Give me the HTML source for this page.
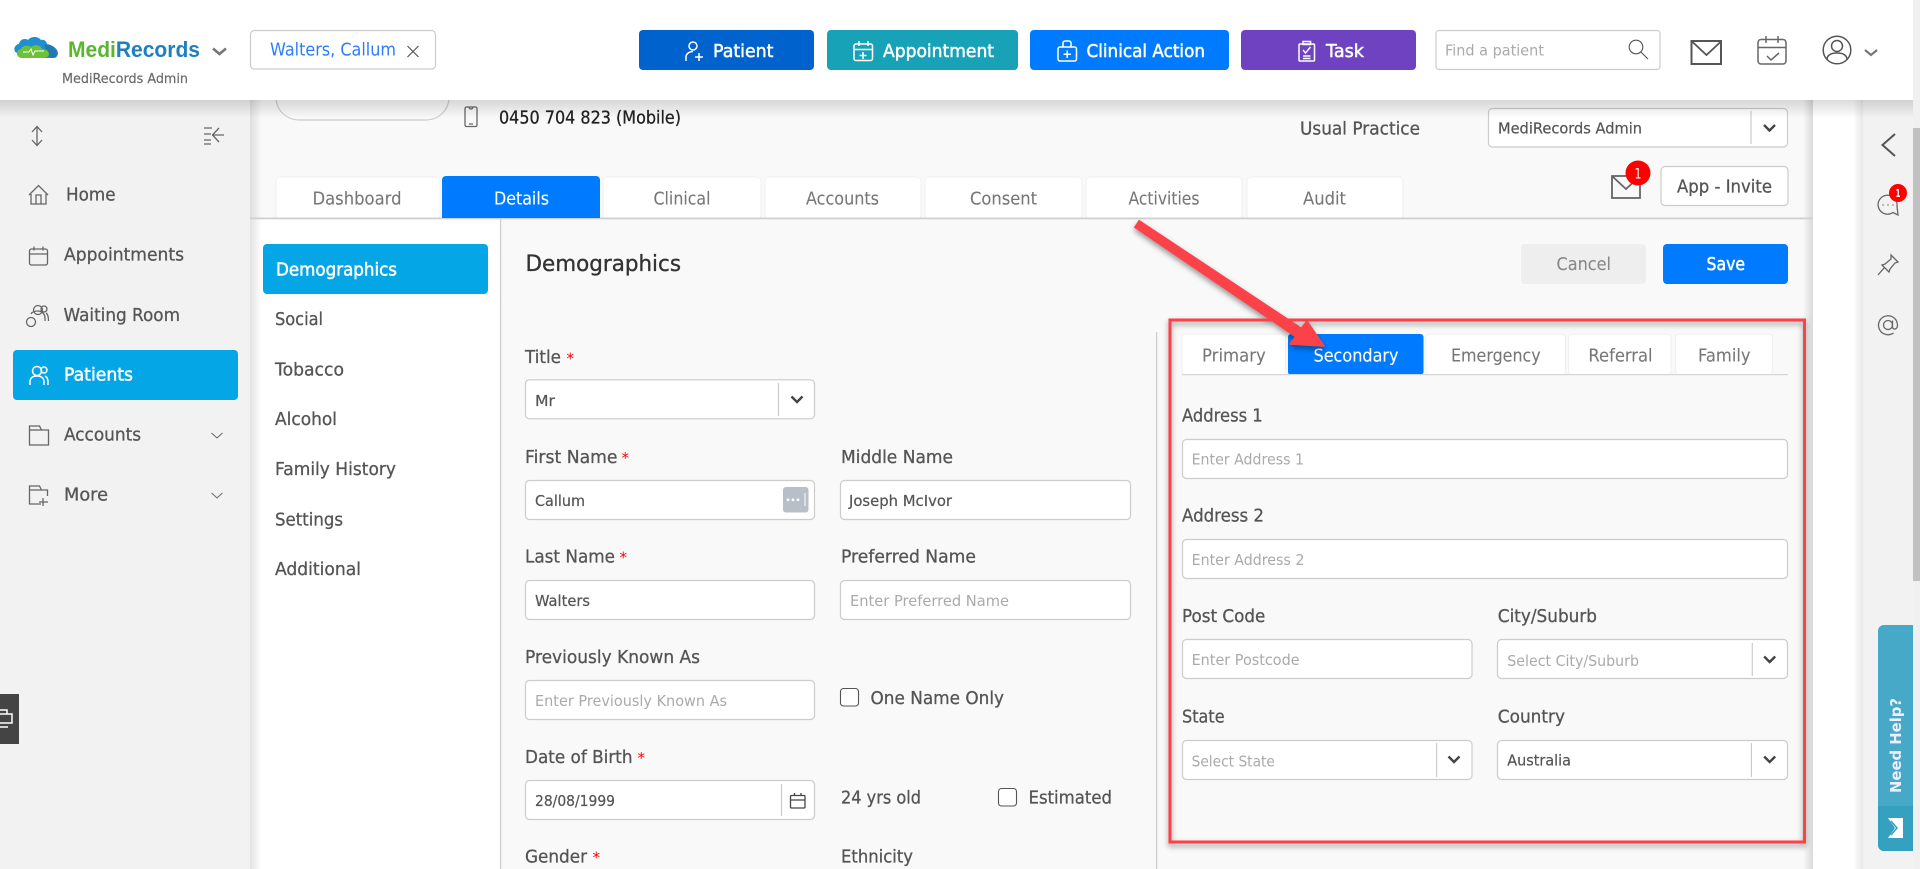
<!DOCTYPE html>
<html lang="en"><head><meta charset="utf-8"><title>MediRecords</title>
<style>
html,body{margin:0;padding:0;background:#f9f9f9;overflow:hidden}
svg{display:block}
text{font-family:"DejaVu Sans","Liberation Sans",sans-serif;font-size:18px;fill:#555;white-space:pre;stroke:#555;stroke-width:.12}
text:not([transform]){transform:translateY(-.7px)}
.m{stroke:#555;stroke-width:.3}
.ph{font-size:15px;fill:#aaa;stroke:none}
.v{font-size:15px;fill:#555;stroke:#555;stroke-width:.22}
.w{fill:#fff;stroke:#fff;stroke-width:.5}
.r{fill:#f00;font-size:15px;stroke:none}
.i{fill:none;stroke:#666;stroke-width:1.3}
.iw{fill:none;stroke:#fff;stroke-width:1.5}
.box{fill:#fff;stroke:#ccc;stroke-width:1.2}
.div{stroke:#ccc;stroke-width:1.2}
.ch{fill:none;stroke:#444;stroke-width:2.4}
.tab{fill:#fff;stroke:#f0f0f0;stroke-width:1}
.tt{fill:#777;stroke:#777;stroke-width:.1}
</style></head><body>
<svg xmlns="http://www.w3.org/2000/svg" width="1920" height="869" viewBox="0 0 1920 869">
<defs>
<linearGradient id="gd" x1="0" y1="0" x2="0" y2="1"><stop offset="0" stop-color="#000" stop-opacity=".14"/><stop offset="1" stop-color="#000" stop-opacity="0"/></linearGradient>
<linearGradient id="gr" x1="0" y1="0" x2="1" y2="0"><stop offset="0" stop-color="#000" stop-opacity=".11"/><stop offset="1" stop-color="#000" stop-opacity="0"/></linearGradient>
<linearGradient id="gl" x1="1" y1="0" x2="0" y2="0"><stop offset="0" stop-color="#000" stop-opacity=".13"/><stop offset="1" stop-color="#000" stop-opacity="0"/></linearGradient>
<filter id="sh" x="-5%" y="-5%" width="110%" height="110%"><feDropShadow dx="0" dy="3" stdDeviation="3" flood-color="#000" flood-opacity=".4"/></filter>
</defs>

<!-- backgrounds -->
<rect width="1920" height="869" fill="#f9f9f9"/>
<rect x="0" y="100" width="250" height="769" fill="#f2f2f2"/>
<rect x="250" y="219" width="250" height="650" fill="#fff"/>
<rect x="500" y="218" width="1.2" height="651" fill="#ccc"/>
<rect x="1813" y="100" width="50" height="769" fill="#fff"/>
<rect x="1863" y="100" width="50" height="769" fill="#f2f2f2"/>
<rect x="1913" y="0" width="7" height="869" fill="#f0f0f0"/>
<rect x="1913" y="128" width="7" height="453" fill="#c1c1c1"/>
<rect x="250" y="100" width="12" height="769" fill="url(#gr)"/>
<rect x="1803" y="100" width="10" height="769" fill="url(#gl)"/>
<rect x="1853" y="100" width="10" height="769" fill="url(#gl)" opacity=".7"/>

<!-- patient summary -->
<path d="M276 100v-3c0 13 10 23 24 23h125c14 0 24-10 24-23v3" fill="#f9f9f9" stroke="#ccc" stroke-width="1.2"/>
<rect x="465" y="107" width="12" height="19.5" rx="1.5" class="i"/><path d="M469 107a2 2 0 0 0 4 0M469 124h4" class="i"/>
<text x="499" y="124" textLength="182" lengthAdjust="spacingAndGlyphs" style="fill:#222;stroke:#222;stroke-width:.3">0450 704 823 (Mobile)</text>
<text x="1300" y="135" textLength="120" lengthAdjust="spacingAndGlyphs" class="m">Usual Practice</text>
<rect x="1488.5" y="108.5" width="299" height="38.5" rx="4" class="box"/>
<text x="1498" y="134" textLength="144" lengthAdjust="spacingAndGlyphs" class="v">MediRecords Admin</text>
<line x1="1751" y1="111" x2="1751" y2="144" class="div"/>
<path d="M1764 125l5.5 5.5 5.5-5.5" class="ch"/>

<!-- main tabs -->
<rect x="276" y="177" width="164" height="42" rx="4" class="tab"/>
<rect x="442" y="176" width="158" height="43" rx="4" fill="#007bff"/>
<rect x="603" y="177" width="158" height="42" rx="4" class="tab"/>
<rect x="765" y="177" width="156" height="42" rx="4" class="tab"/>
<rect x="925" y="177" width="157" height="42" rx="4" class="tab"/>
<rect x="1086" y="177" width="156" height="42" rx="4" class="tab"/>
<rect x="1247" y="177" width="156" height="42" rx="4" class="tab"/>
<rect x="250" y="217.5" width="1563" height="1.8" fill="#d0d0d0"/>
<rect x="442" y="200" width="158" height="18" fill="#007bff"/>
<text x="312.5" y="205" textLength="89" lengthAdjust="spacingAndGlyphs" class="tt">Dashboard</text>
<text x="494" y="205" textLength="55" lengthAdjust="spacingAndGlyphs" style="fill:#fff;stroke:#fff">Details</text>
<text x="653.5" y="205" textLength="57" lengthAdjust="spacingAndGlyphs" class="tt">Clinical</text>
<text x="806" y="205" textLength="73" lengthAdjust="spacingAndGlyphs" class="tt">Accounts</text>
<text x="970" y="205" textLength="67" lengthAdjust="spacingAndGlyphs" class="tt">Consent</text>
<text x="1128.5" y="205" textLength="71" lengthAdjust="spacingAndGlyphs" class="tt">Activities</text>
<text x="1303" y="205" textLength="43" lengthAdjust="spacingAndGlyphs" class="tt">Audit</text>

<!-- message + app invite -->
<rect x="1612" y="176" width="28" height="22" class="i" style="stroke-width:1.8;stroke:#666"/>
<path d="M1612 176l14 13 14-13" class="i" style="stroke-width:1.8"/>
<circle cx="1638" cy="173" r="12.5" fill="#f00"/>
<text x="1634.5" y="179" textLength="7" lengthAdjust="spacingAndGlyphs" style="fill:#fff;stroke:none;font-size:14px">1</text>
<rect x="1661" y="166.5" width="127" height="39" rx="4" class="box"/>
<text x="1677" y="193" textLength="95" lengthAdjust="spacingAndGlyphs" class="m">App - Invite</text>

<!-- sidebar -->
<path d="M37 127v18M32 132l5-5.500 5 5.500M32 140l5 5.500 5-5.500" class="i"/>
<path d="M204 128h8M204 134h7M204 140h7M204 144h7M224 135h-11M219 128l-6.500 7 6.500 7" class="i"/>
<path d="M29 195l9.500-9.500L48 195M31 194v10h15v-10M36 204v-9h5v9" class="i"/>
<text x="66" y="201" textLength="49.500" lengthAdjust="spacingAndGlyphs" class="m">Home</text>
<rect x="29.500" y="249" width="18" height="16" rx="2" class="i"/><path d="M29.500 254h18M34 246.500v4M43 246.500v4" class="i"/>
<text x="64" y="261" textLength="120" lengthAdjust="spacingAndGlyphs" class="m">Appointments</text>
<circle cx="38" cy="310" r="4.500" class="i"/><circle cx="44" cy="309" r="3" class="i"/><circle cx="31" cy="322" r="4.500" class="i"/>
<path d="M31 314c1-2 3-3 7-3s7 3 7 7v3M46 313c2 1 2.500 4 2.500 8" class="i"/>
<text x="63.500" y="321.500" textLength="116.500" lengthAdjust="spacingAndGlyphs" class="m">Waiting Room</text>
<rect x="13" y="350" width="225" height="50" rx="4" fill="#05a6e6"/>
<circle cx="37" cy="371" r="4.500" class="iw"/><circle cx="44" cy="370" r="3" class="iw"/>
<path d="M30 385v-3c0-4 3-6 7-6s7 2 7 6v3M45 376c2 1 3 3 3 6v3" class="iw"/>
<text x="64" y="381" textLength="69" lengthAdjust="spacingAndGlyphs" class="w">Patients</text>
<path d="M29.500 445v-19h10l2 4h7v15z" class="i"/><path d="M29.500 430h12" class="i"/>
<text x="64" y="441" textLength="77" lengthAdjust="spacingAndGlyphs" class="m">Accounts</text>
<path d="M211.500 433l5.500 5 5.500-5" class="i" style="stroke-width:1"/>
<path d="M41 504H29.500v-18h10l2 4h6v6M29.500 490h12M43 498v8M39 502h9" class="i"/>
<text x="64" y="501" textLength="44" lengthAdjust="spacingAndGlyphs" class="m">More</text>
<path d="M211.500 493l5.500 5 5.500-5" class="i" style="stroke-width:1"/>
<rect x="0" y="694" width="19" height="50" fill="#444"/>
<path d="M0 710h7v4M0 714h12v9H0M0 727h8" fill="none" stroke="#fff" stroke-width="1.500"/>

<!-- sub nav -->
<rect x="263" y="244" width="225" height="50" rx="4" fill="#05a6e6"/>
<text x="276" y="276" textLength="121" lengthAdjust="spacingAndGlyphs" class="w">Demographics</text>
<text x="275" y="325.500" textLength="48" lengthAdjust="spacingAndGlyphs" class="m">Social</text>
<text x="275" y="376" textLength="69" lengthAdjust="spacingAndGlyphs" class="m">Tobacco</text>
<text x="275" y="425.500" textLength="62" lengthAdjust="spacingAndGlyphs" class="m">Alcohol</text>
<text x="275" y="475.500" textLength="121" lengthAdjust="spacingAndGlyphs" class="m">Family History</text>
<text x="275" y="526" textLength="68" lengthAdjust="spacingAndGlyphs" class="m">Settings</text>
<text x="275" y="575.500" textLength="86" lengthAdjust="spacingAndGlyphs" class="m">Additional</text>

<!-- heading & actions -->
<text x="525.500" y="271.500" textLength="155.500" lengthAdjust="spacingAndGlyphs" style="font-size:22.500px;fill:#333;stroke:#333;stroke-width:.35">Demographics</text>
<rect x="1521" y="244" width="125" height="40" rx="4" fill="#eee"/>
<text x="1556.500" y="270.500" textLength="54.500" lengthAdjust="spacingAndGlyphs" style="fill:#888;stroke:#888">Cancel</text>
<rect x="1663" y="244" width="125" height="40" rx="4" fill="#007bff"/>
<text x="1706.500" y="270.500" textLength="38.500" lengthAdjust="spacingAndGlyphs" class="w">Save</text>

<!-- left form -->
<text x="525" y="363.800" textLength="36" lengthAdjust="spacingAndGlyphs" class="m">Title</text><text x="566.500" y="364" class="r">*</text>
<rect x="525.500" y="379.800" width="289" height="39" rx="4" class="box"/>
<text x="535" y="406.800" textLength="20" lengthAdjust="spacingAndGlyphs" class="v">Mr</text>
<line x1="778.500" y1="383" x2="778.500" y2="416" class="div"/><path d="M791.500 396.500l5.500 5.500 5.500-5.500" class="ch"/>

<text x="525" y="463.500" textLength="92.500" lengthAdjust="spacingAndGlyphs" class="m">First Name</text><text x="621.500" y="463.500" class="r">*</text>
<text x="841" y="463.500" textLength="112" lengthAdjust="spacingAndGlyphs" class="m">Middle Name</text>
<rect x="525.500" y="480.500" width="289" height="39" rx="4" class="box"/>
<text x="535" y="506.600" textLength="50" lengthAdjust="spacingAndGlyphs" class="v">Callum</text>
<rect x="783" y="487" width="25.500" height="25.500" rx="3" fill="#b8bfc9"/>
<circle cx="788" cy="499.800" r="1.400" fill="#fff"/><circle cx="793" cy="499.800" r="1.400" fill="#fff"/><circle cx="798" cy="499.800" r="1.400" fill="#fff"/><rect x="804.500" y="493" width="1" height="13" fill="#fff"/>
<rect x="840.500" y="480.500" width="290" height="39" rx="4" class="box"/>
<text x="849" y="506.600" textLength="103" lengthAdjust="spacingAndGlyphs" class="v">Joseph McIvor</text>

<text x="525" y="563.300" textLength="90" lengthAdjust="spacingAndGlyphs" class="m">Last Name</text><text x="619.500" y="563.300" class="r">*</text>
<text x="841" y="563.300" textLength="135" lengthAdjust="spacingAndGlyphs" class="m">Preferred Name</text>
<rect x="525.500" y="580.500" width="289" height="39" rx="4" class="box"/>
<text x="535" y="606.800" textLength="55" lengthAdjust="spacingAndGlyphs" class="v">Walters</text>
<rect x="840.500" y="580.500" width="290" height="39" rx="4" class="box"/>
<text x="850" y="606.800" textLength="159" lengthAdjust="spacingAndGlyphs" class="ph">Enter Preferred Name</text>

<text x="525" y="663.500" textLength="175" lengthAdjust="spacingAndGlyphs" class="m">Previously Known As</text>
<rect x="525.500" y="680.500" width="289" height="39" rx="4" class="box"/>
<text x="535" y="706.500" textLength="192" lengthAdjust="spacingAndGlyphs" class="ph">Enter Previously Known As</text>
<rect x="840.500" y="688.500" width="18" height="17.500" rx="3" fill="#fff" stroke="#555" stroke-width="1.100"/>
<text x="870.500" y="704.500" textLength="133.500" lengthAdjust="spacingAndGlyphs" class="m">One Name Only</text>

<text x="525" y="763.600" textLength="107.500" lengthAdjust="spacingAndGlyphs" class="m">Date of Birth</text><text x="637.500" y="763.600" class="r">*</text>
<rect x="525.500" y="780.500" width="289" height="39" rx="4" class="box"/>
<text x="535" y="806.700" textLength="80" lengthAdjust="spacingAndGlyphs" class="v">28/08/1999</text>
<line x1="781.500" y1="784" x2="781.500" y2="816" class="div"/>
<rect x="790.500" y="795.500" width="14.500" height="12.500" rx="1" class="i" style="stroke:#444"/><path d="M790.500 800h14.500M794.500 793v3M801 793v3" class="i" style="stroke:#444"/>
<text x="841" y="804" textLength="80" lengthAdjust="spacingAndGlyphs" class="m">24 yrs old</text>
<rect x="998.500" y="788.500" width="18" height="17.500" rx="3" fill="#fff" stroke="#555" stroke-width="1.100"/>
<text x="1028.500" y="804" textLength="83.500" lengthAdjust="spacingAndGlyphs" class="m">Estimated</text>
<text x="525" y="863.400" textLength="62" lengthAdjust="spacingAndGlyphs" class="m">Gender</text><text x="592.500" y="863.400" class="r">*</text>
<text x="841" y="863.400" textLength="72" lengthAdjust="spacingAndGlyphs" class="m">Ethnicity</text>

<!-- right form -->
<line x1="1156.600" y1="332" x2="1156.600" y2="869" class="div"/>
<rect x="1182" y="334" width="103.500" height="41" rx="4" class="tab"/>
<rect x="1288" y="334" width="135.500" height="41" rx="3" fill="#007bff"/>
<rect x="1426" y="334" width="139.500" height="41" rx="4" class="tab"/>
<rect x="1568.500" y="334" width="102.500" height="41" rx="4" class="tab"/>
<rect x="1675.500" y="334" width="97" height="41" rx="4" class="tab"/>
<rect x="1182" y="374" width="606" height="1.200" fill="#d6d6d6"/>
<text x="1202" y="362.400" textLength="63.800" lengthAdjust="spacingAndGlyphs" class="tt">Primary</text>
<text x="1313.500" y="362.400" textLength="85" lengthAdjust="spacingAndGlyphs" style="fill:#fff;stroke:#fff">Secondary</text>
<text x="1451" y="362.400" textLength="89.700" lengthAdjust="spacingAndGlyphs" class="tt">Emergency</text>
<text x="1588.400" y="362.400" textLength="64.200" lengthAdjust="spacingAndGlyphs" class="tt">Referral</text>
<text x="1698" y="362.400" textLength="52.600" lengthAdjust="spacingAndGlyphs" class="tt">Family</text>

<text x="1182" y="422" textLength="80.700" lengthAdjust="spacingAndGlyphs" class="m">Address 1</text>
<rect x="1182.500" y="439.500" width="605" height="39" rx="4" class="box"/>
<text x="1191.600" y="465.400" textLength="112.400" lengthAdjust="spacingAndGlyphs" class="ph">Enter Address 1</text>
<text x="1182" y="522" textLength="82" lengthAdjust="spacingAndGlyphs" class="m">Address 2</text>
<rect x="1182.500" y="539.500" width="605" height="39" rx="4" class="box"/>
<text x="1191.600" y="565.500" textLength="112.800" lengthAdjust="spacingAndGlyphs" class="ph">Enter Address 2</text>
<text x="1182" y="622.700" textLength="83.300" lengthAdjust="spacingAndGlyphs" class="m">Post Code</text>
<text x="1497.800" y="622.700" textLength="99.200" lengthAdjust="spacingAndGlyphs" class="m">City/Suburb</text>
<rect x="1182.500" y="639.500" width="289.500" height="39" rx="4" class="box"/>
<text x="1191.600" y="665.800" textLength="108" lengthAdjust="spacingAndGlyphs" class="ph">Enter Postcode</text>
<rect x="1497.500" y="639.500" width="290" height="39" rx="4" class="box"/>
<text x="1507.300" y="666.500" textLength="131.700" lengthAdjust="spacingAndGlyphs" class="ph">Select City/Suburb</text>
<line x1="1752.300" y1="643" x2="1752.300" y2="676" class="div"/><path d="M1764.200 656.500l5.500 5.500 5.500-5.500" class="ch"/>
<text x="1182" y="723" textLength="42.600" lengthAdjust="spacingAndGlyphs" class="m">State</text>
<text x="1497.800" y="723" textLength="67.200" lengthAdjust="spacingAndGlyphs" class="m">Country</text>
<rect x="1182.500" y="740.500" width="289.500" height="39" rx="4" class="box"/>
<text x="1191.600" y="767" textLength="83.300" lengthAdjust="spacingAndGlyphs" class="ph">Select State</text>
<line x1="1436.600" y1="743" x2="1436.600" y2="777" class="div"/><path d="M1448.500 756.500l5.500 5.500 5.500-5.500" class="ch"/>
<rect x="1497.500" y="740.500" width="290" height="39" rx="4" class="box"/>
<text x="1507.300" y="766" textLength="63.700" lengthAdjust="spacingAndGlyphs" class="v">Australia</text>
<line x1="1751.400" y1="743" x2="1751.400" y2="777" class="div"/><path d="M1764.200 756.500l5.500 5.500 5.500-5.500" class="ch"/>

<!-- annotations -->
<g filter="url(#sh)">
<rect x="1170" y="320" width="634.500" height="522" fill="none" stroke="#fb4348" stroke-width="3"/>
<path d="M1139.200 220.700L1301.300 328.300 1307 321 1324 346 1290 344 1295.700 336.700 1134.800 227.300Z" fill="#fb4348" stroke="#fb4348" stroke-width="1.500" stroke-linejoin="round"/>
</g>

<!-- right rail -->
<path d="M1895 134l-12.500 11 12.500 11" fill="none" stroke="#555" stroke-width="2"/>
<path d="M1897 206a9.500 9.500 0 1 0-4 6.500l5 2.500z" class="i"/>
<circle cx="1883" cy="205" r=".7" fill="#666"/><circle cx="1888" cy="205" r=".7" fill="#666"/><circle cx="1893" cy="205" r=".7" fill="#666"/>
<circle cx="1898" cy="193" r="9" fill="#f00"/>
<text x="1895.500" y="197.500" textLength="5" lengthAdjust="spacingAndGlyphs" style="fill:#fff;stroke:none;font-size:11px;font-weight:bold">1</text>
<path d="M1891 255l7 7-3 1-5 6-1 3-7-7 3-1 6-5zM1884 268l-6 7" class="i"/>
<circle cx="1888" cy="325" r="4.500" class="i"/>
<path d="M1892.500 320.500v6.500c0 3 5 3 5-2a9.500 9.500 0 1 0-4 8" class="i"/>
<path d="M1913 625h-29a6 6 0 0 0-6 6v214a6 6 0 0 0 6 6h29z" fill="#45a9c7"/>
<path d="M1913 806h-35v39a6 6 0 0 0 6 6h29z" fill="#35a0bf"/>
<text transform="translate(1901 793) rotate(-90)" x="0" y="0" textLength="95" lengthAdjust="spacingAndGlyphs" style="fill:#eef;stroke:none;font-size:15px;font-weight:bold">Need Help?</text>
<path d="M1888 818h15v20h-15l7-10z" fill="#fff"/><path d="M1891 821l6 7-6 7" fill="none" stroke="#35a0bf" stroke-width="1.500"/>

<!-- header -->
<rect x="0" y="100" width="1913" height="18" fill="url(#gd)"/>
<rect x="0" y="0" width="1913" height="100" fill="#fff"/>
<!-- logo -->
<path d="M18 53c-5 0-5-8 1-9 1-5 6-6 9-4 3-4 10-4 13 0 4-1 6 2 6 5 5-1 11 4 11 8s-4 5-7 5H30z" fill="#1f8fd0"/>
<path d="M45 44c4 0 8 1 11 7 2 3 2 7-3 7-6 0-9-4-8-14z" fill="#2378ad"/>
<path d="M22 58c-6 0-7-8-1-9 2-4 7-4 10-2 3-3 10-2 11 2 5 0 7 3 7 5s-2 4-5 4z" fill="#6cc03a"/>
<path d="M23 52h6l2-3 2 6 2-4h9" fill="none" stroke="#fff" stroke-width="1"/>
<text x="68" y="57.700" textLength="132" lengthAdjust="spacingAndGlyphs" style="font-family:'Liberation Sans',sans-serif;font-size:22px;font-weight:bold;fill:#1f7fbf;stroke:none"><tspan style="fill:#5cb531">Medi</tspan>Records</text>
<path d="M213 48.500l6.500 5.500 6.500-5.500" fill="none" stroke="#777" stroke-width="2.600"/>
<text x="62" y="83.700" textLength="126" lengthAdjust="spacingAndGlyphs" style="font-size:13px;fill:#6b6b6b;stroke:#6b6b6b;stroke-width:.2">MediRecords Admin</text>
<!-- patient tag -->
<rect x="250.500" y="30.500" width="185" height="38.500" rx="4" class="box"/>
<text x="270" y="56" textLength="126" lengthAdjust="spacingAndGlyphs" style="fill:#2b7cff;stroke:none">Walters, Callum</text>
<path d="M407.500 46l11 11M418.500 46l-11 11" fill="none" stroke="#555" stroke-width="1.200"/>
<!-- action buttons -->
<rect x="639" y="30" width="175" height="40" rx="4" fill="#0062cc"/>
<circle cx="693" cy="46" r="4" class="iw"/><path d="M686 61v-4c0-3 3-5.500 7-5.500M699 53v8M695 57h8" class="iw"/>
<text x="713" y="57.500" textLength="60.500" lengthAdjust="spacingAndGlyphs" class="w">Patient</text>
<rect x="827" y="30" width="191" height="40" rx="4" fill="#17a2b8"/>
<rect x="854" y="44" width="18.500" height="16.500" rx="2" class="iw"/><path d="M854 49.500h18.500M859 41v5M868 41v5M863 52v7M859.500 55.500h7" class="iw"/>
<text x="883" y="57.500" textLength="111" lengthAdjust="spacingAndGlyphs" class="w">Appointment</text>
<rect x="1030" y="30" width="199" height="40" rx="4" fill="#007bff"/>
<rect x="1058" y="47" width="18.500" height="14" rx="2" class="iw"/><path d="M1063 47v-4a2 2 0 0 1 2-2h4a2 2 0 0 1 2 2v4M1067.200 50.500v7.500M1063.500 54.200h7.500" class="iw"/>
<text x="1086.500" y="57.500" textLength="118.500" lengthAdjust="spacingAndGlyphs" class="w">Clinical Action</text>
<rect x="1241" y="30" width="175" height="40" rx="4" fill="#6f42c1"/>
<rect x="1299" y="44" width="15.500" height="17" rx="1" class="iw"/><path d="M1303 41.500h7.500v3h-7.500zM1303 50l2.500 3 5-6M1303 56h7.500M1303 58.500h7.500" class="iw"/>
<text x="1326" y="57.500" textLength="38" lengthAdjust="spacingAndGlyphs" class="w">Task</text>
<!-- find -->
<rect x="1436" y="30.500" width="224" height="39" rx="3" class="box"/>
<text x="1445" y="56" textLength="99" lengthAdjust="spacingAndGlyphs" style="font-size:15.500px;fill:#aaa;stroke:none">Find a patient</text>
<circle cx="1636" cy="47" r="6.800" class="i" style="stroke:#555;stroke-width:1.100"/><path d="M1641 52l7 7" class="i" style="stroke:#555;stroke-width:1.100"/>
<!-- top icons -->
<rect x="1691.500" y="41" width="29.500" height="23" fill="none" stroke="#555" stroke-width="2"/><path d="M1691.500 41l15 14 15-14" fill="none" stroke="#555" stroke-width="1.800"/>
<rect x="1758" y="39.500" width="28" height="24.500" rx="3" fill="none" stroke="#666" stroke-width="1.500"/><path d="M1758 47.500h28M1766 36v7M1778 36v7M1767 56l4 4 8-7" fill="none" stroke="#666" stroke-width="1.500"/>
<circle cx="1837" cy="50" r="13.800" fill="none" stroke="#555" stroke-width="1.500"/><circle cx="1837" cy="46" r="5.500" fill="none" stroke="#555" stroke-width="1.500"/><path d="M1827 60c0-5 4-7 10-7s10 2 10 7" fill="none" stroke="#555" stroke-width="1.500"/>
<path d="M1865 50l6 5 6-5" fill="none" stroke="#777" stroke-width="2.200"/>
</svg>
</body></html>
